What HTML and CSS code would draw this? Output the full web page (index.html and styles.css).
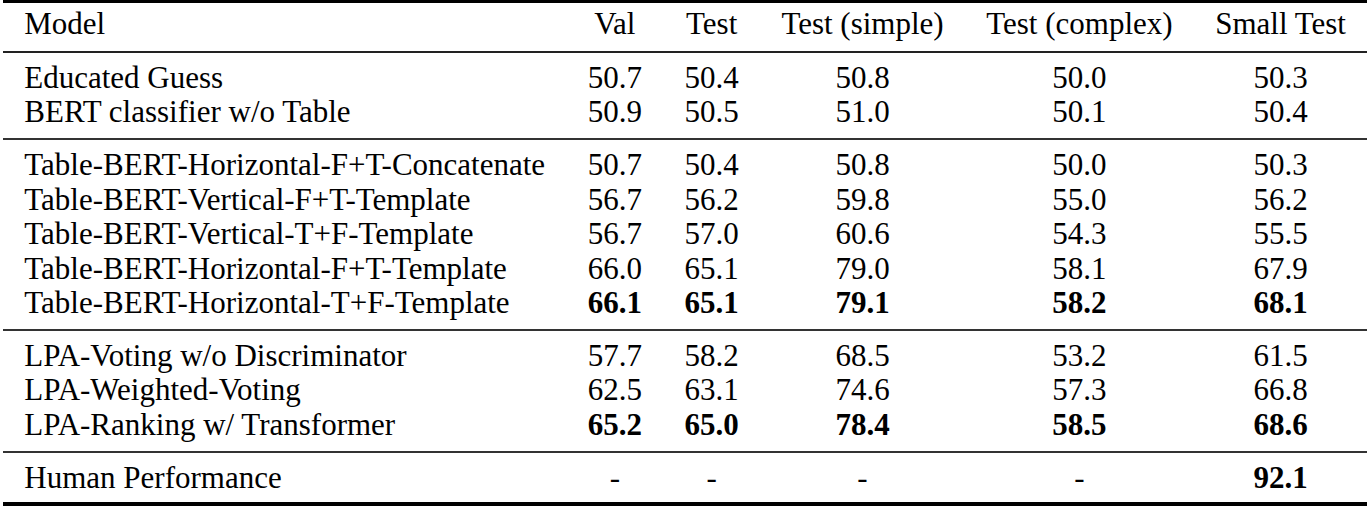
FILE: index.html
```html
<!DOCTYPE html>
<html lang="en">
<head>
<meta charset="utf-8">
<title>Results table</title>
<link rel="stylesheet" href="styles.css">
</head>
<body>
<table class="results">
  <thead>
    <tr>
      <th class="name">Model</th>
      <th>Val</th>
      <th>Test</th>
      <th>Test (simple)</th>
      <th>Test (complex)</th>
      <th>Small Test</th>
    </tr>
  </thead>
  <tbody>
    <tr><td class="name">Educated Guess</td><td>50.7</td><td>50.4</td><td>50.8</td><td>50.0</td><td>50.3</td></tr>
    <tr><td class="name">BERT classifier w/o Table</td><td>50.9</td><td>50.5</td><td>51.0</td><td>50.1</td><td>50.4</td></tr>
  </tbody>
  <tbody>
    <tr><td class="name">Table-BERT-Horizontal-F+T-Concatenate</td><td>50.7</td><td>50.4</td><td>50.8</td><td>50.0</td><td>50.3</td></tr>
    <tr><td class="name">Table-BERT-Vertical-F+T-Template</td><td>56.7</td><td>56.2</td><td>59.8</td><td>55.0</td><td>56.2</td></tr>
    <tr><td class="name">Table-BERT-Vertical-T+F-Template</td><td>56.7</td><td>57.0</td><td>60.6</td><td>54.3</td><td>55.5</td></tr>
    <tr><td class="name">Table-BERT-Horizontal-F+T-Template</td><td>66.0</td><td>65.1</td><td>79.0</td><td>58.1</td><td>67.9</td></tr>
    <tr><td class="name">Table-BERT-Horizontal-T+F-Template</td><td class="best">66.1</td><td class="best">65.1</td><td class="best">79.1</td><td class="best">58.2</td><td class="best">68.1</td></tr>
  </tbody>
  <tbody>
    <tr><td class="name">LPA-Voting w/o Discriminator</td><td>57.7</td><td>58.2</td><td>68.5</td><td>53.2</td><td>61.5</td></tr>
    <tr><td class="name">LPA-Weighted-Voting</td><td>62.5</td><td>63.1</td><td>74.6</td><td>57.3</td><td>66.8</td></tr>
    <tr><td class="name">LPA-Ranking w/ Transformer</td><td class="best">65.2</td><td class="best">65.0</td><td class="best">78.4</td><td class="best">58.5</td><td class="best">68.6</td></tr>
  </tbody>
  <tbody class="last">
    <tr><td class="name">Human Performance</td><td>-</td><td>-</td><td>-</td><td>-</td><td class="best">92.1</td></tr>
  </tbody>
</table>
</body>
</html>
```

FILE: styles.css
```css
html, body {
  margin: 0;
  padding: 0;
  background: #ffffff;
}

.results {
  margin-left: 3px;
  border-collapse: separate;
  border-spacing: 0;
  font-family: "Liberation Serif", "Times New Roman", serif;
  font-size: 31px;
  line-height: 34.4px;
  color: #000;
}

.results th,
.results td {
  padding: 0 21.3px;
  text-align: center;
  white-space: nowrap;
  font-weight: normal;
}

.results .name {
  text-align: left;
}

.results .best {
  font-weight: bold;
}

.results thead th {
  border-top: 3px solid #000;
  border-bottom: 2px solid #222;
  padding-top: 4px;
  padding-bottom: 9.6px;
}

.results tbody tr:first-child td {
  padding-top: 8px;
}

.results tbody tr:last-child td {
  padding-bottom: 8.5px;
  border-bottom: 2px solid #333;
}

.results tbody.last tr:last-child td {
  padding-bottom: 7px;
  border-bottom: 4px solid #000;
}
```
